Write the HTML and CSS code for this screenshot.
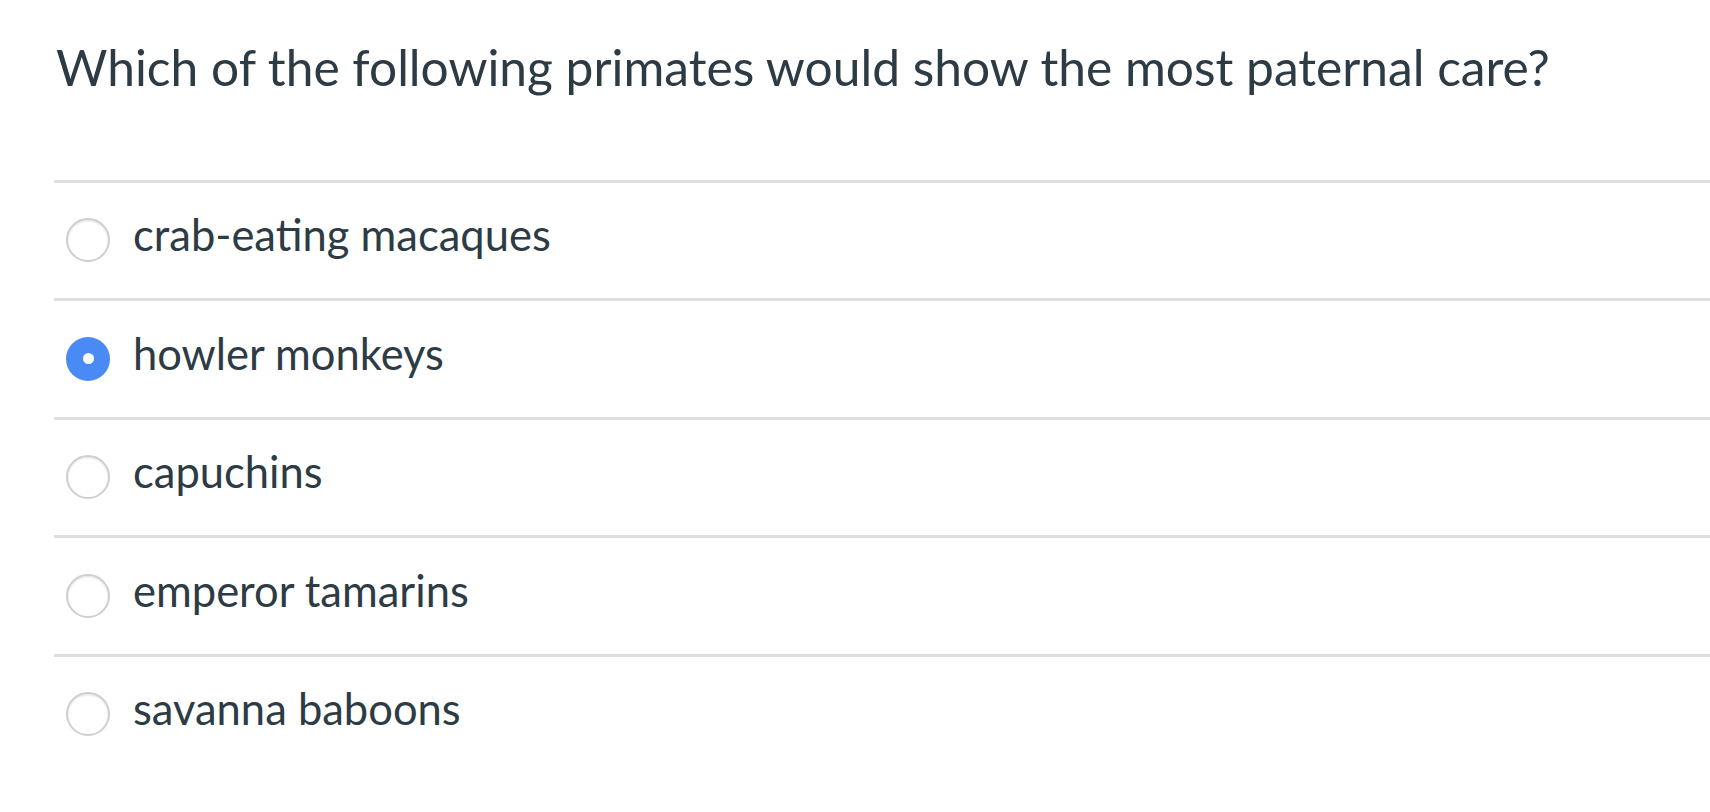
FILE: index.html
```html
<!DOCTYPE html>
<html>
<head>
<meta charset="utf-8">
<link rel="stylesheet" href="styles.css">
</head>
<body>
<div class="question">
  <h1 class="question-text">Which of the following primates would show the most paternal care?</h1>
  <div class="answers">
    <label class="answer"><span class="radio"></span><span class="answer-text">crab-eating macaques</span></label>
    <label class="answer"><span class="radio radio-checked"></span><span class="answer-text">howler monkeys</span></label>
    <label class="answer"><span class="radio"></span><span class="answer-text">capuchins</span></label>
    <label class="answer"><span class="radio"></span><span class="answer-text">emperor tamarins</span></label>
    <label class="answer"><span class="radio"></span><span class="answer-text">savanna baboons</span></label>
  </div>
</div>
</body>
</html>
```

FILE: styles.css
```css
html, body {
  margin: 0;
  padding: 0;
  background: #ffffff;
}

body {
  font-family: Lato, "Open Sans", sans-serif;
  color: #2d3b45;
  overflow: hidden;
}

.question {
  padding-left: 54px;
}

.question-text {
  margin: 0;
  padding-top: 38px;
  padding-bottom: 82px;
  padding-left: 2px;
  font-size: 49.7px;
  line-height: 1.2;
  font-weight: 400;
  white-space: nowrap;
}

.answers {
  display: flex;
  flex-direction: column;
}

.answer {
  display: flex;
  align-items: center;
  box-sizing: border-box;
  height: 118.5px;
  border-top: 3px solid #dedede;
  padding-left: 12px;
}

.radio {
  flex: none;
  box-sizing: border-box;
  width: 44px;
  height: 44px;
  border-radius: 50%;
  border: 2px solid #cfcfcf;
  background: #ffffff;
  box-shadow: inset 0 1px 2px rgba(0, 0, 0, 0.12);
  margin-right: 23px;
}

.radio-checked {
  border: none;
  background: #4a8af4;
  box-shadow: none;
  display: flex;
  align-items: center;
  justify-content: center;
}

.radio-checked::after {
  content: "";
  width: 11px;
  height: 11px;
  border-radius: 50%;
  background: #ffffff;
}

.answer-text {
  font-size: 43.5px;
  line-height: 43.5px;
  padding-bottom: 11px;
  white-space: nowrap;
}
```
